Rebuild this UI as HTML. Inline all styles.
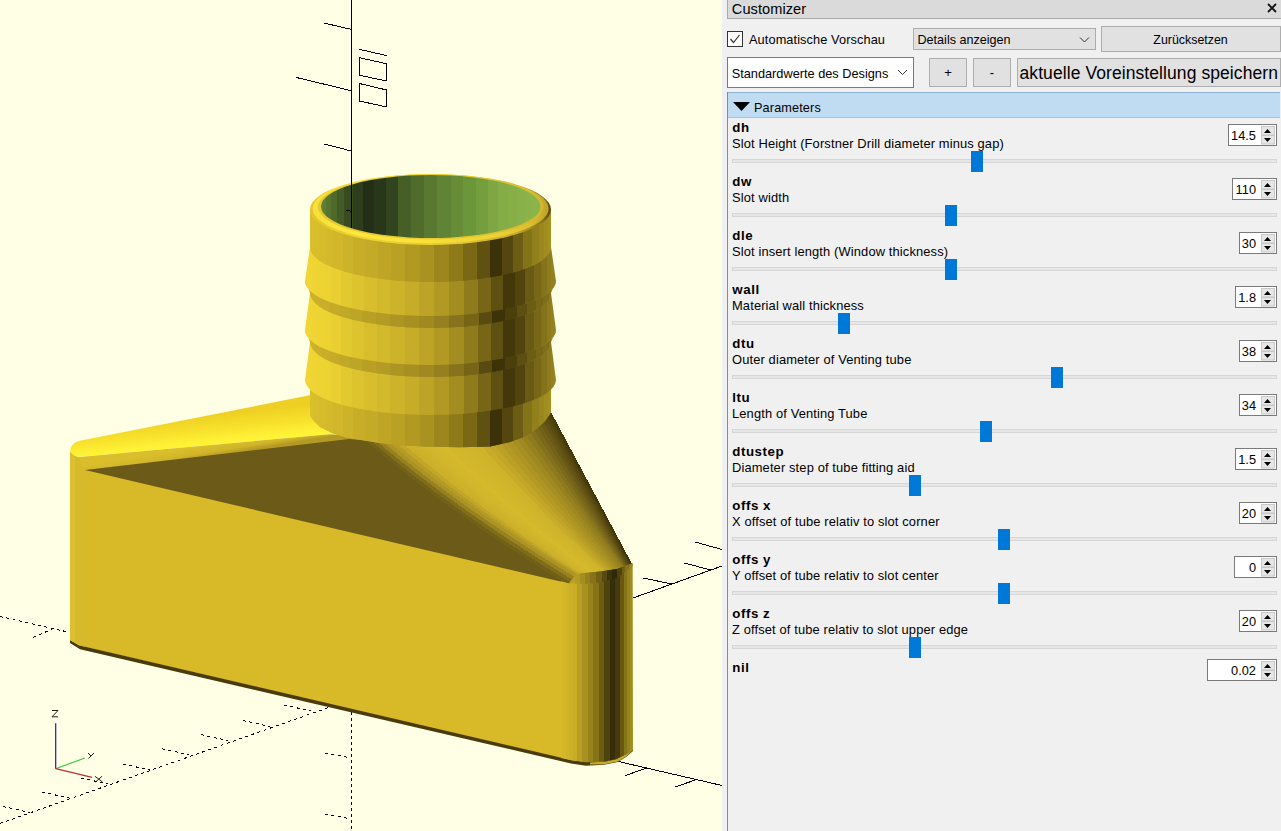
<!DOCTYPE html>
<html><head><meta charset="utf-8"><style>
html,body{margin:0;padding:0;background:#f0f0f0;}
body{width:1281px;height:831px;overflow:hidden;position:relative;}
svg{position:absolute;left:0;top:0;font-family:"Liberation Sans", sans-serif;}
</style></head><body>
<svg width="1281" height="831" viewBox="0 0 1281 831">
<rect x="722" y="0" width="559" height="831" fill="#f0f0f0"/>
<rect x="727" y="0" width="554" height="18" fill="#dadada"/>
<line x1="727.5" y1="0" x2="727.5" y2="18.5" stroke="#a8a8a8"/>
<line x1="727" y1="18.5" x2="1281" y2="18.5" stroke="#a8a8a8"/>
<text x="731.8" y="14" font-size="14.6" font-weight="normal" fill="#000" text-anchor="start" letter-spacing="0.05">Customizer</text>
<path d="M1268,4 L1276,12 M1276,4 L1268,12" stroke="#111" stroke-width="1.8"/>
<rect x="727.5" y="31.5" width="15" height="15" fill="#fff" stroke="#333" stroke-width="1"/>
<path d="M730.5,39 L733.5,42.5 L739.5,35" fill="none" stroke="#333" stroke-width="1.2"/>
<text x="749" y="43.7" font-size="12.75" font-weight="normal" fill="#000" text-anchor="start" letter-spacing="0.1">Automatische Vorschau</text>
<rect x="913.5" y="28.5" width="182" height="21" fill="#e1e1e1" stroke="#adadad" stroke-width="1"/>
<text x="917.5" y="43.9" font-size="12.6" font-weight="normal" fill="#000" text-anchor="start">Details anzeigen</text>
<path d="M1080,37.5 L1084.5,42 L1089,37.5" fill="none" stroke="#333" stroke-width="1"/>
<rect x="1101.5" y="26.5" width="179" height="25" fill="#e1e1e1" stroke="#adadad" stroke-width="1"/>
<text x="1190.5" y="44" font-size="12.4" font-weight="normal" fill="#000" text-anchor="middle">Zurücksetzen</text>
<rect x="727.5" y="57.5" width="186" height="30" fill="#ffffff" stroke="#7a7a7a" stroke-width="1"/>
<text x="731.7" y="77.8" font-size="12.75" font-weight="normal" fill="#000" text-anchor="start">Standardwerte des Designs</text>
<path d="M898,70 L902.5,74.5 L907,70" fill="none" stroke="#333" stroke-width="1"/>
<rect x="929.5" y="58.5" width="37" height="28" fill="#e1e1e1" stroke="#adadad" stroke-width="1"/>
<text x="948" y="77" font-size="13" font-weight="normal" fill="#000" text-anchor="middle">+</text>
<rect x="973.5" y="58.5" width="37" height="28" fill="#e1e1e1" stroke="#adadad" stroke-width="1"/>
<text x="992" y="77" font-size="13" font-weight="normal" fill="#000" text-anchor="middle">-</text>
<rect x="1017.5" y="58.5" width="263" height="28" fill="#e1e1e1" stroke="#adadad" stroke-width="1"/>
<text x="1019.5" y="79.3" font-size="17.5" font-weight="normal" fill="#000" text-anchor="start" letter-spacing="0.08">aktuelle Voreinstellung speichern</text>
<rect x="727" y="92" width="553" height="26" fill="#c0dcf3"/>
<line x1="727" y1="92.5" x2="1280" y2="92.5" stroke="#8fb3d6"/>
<line x1="727" y1="117.5" x2="1280" y2="117.5" stroke="#9ec4e8"/>
<path d="M733,102 L750,102 L741.5,111 Z" fill="#000"/>
<text x="754" y="111.6" font-size="12.7" font-weight="normal" fill="#000" text-anchor="start" letter-spacing="0.13">Parameters</text>
<line x1="727.5" y1="92" x2="727.5" y2="831" stroke="#8a8a8a"/>
<text x="732.3" y="131.7" font-size="13.3" font-weight="bold" fill="#000" text-anchor="start" letter-spacing="0.55">dh</text>
<text x="732" y="148" font-size="12.9" font-weight="normal" fill="#000" text-anchor="start" letter-spacing="0.13">Slot Height (Forstner Drill diameter minus gap)</text>
<rect x="732.5" y="159.5" width="544" height="3" fill="#e7e7e7" stroke="#d6d6d6" stroke-width="1"/>
<rect x="971" y="151" width="12" height="21" fill="#0078d7"/>
<rect x="1228.5" y="124.5" width="48" height="21" fill="#ffffff" stroke="#7a7a7a" stroke-width="1"/>
<rect x="1261.5" y="126.5" width="13" height="8.5" fill="#e6e6e6" stroke="#c8c8c8" stroke-width="1"/>
<rect x="1261.5" y="135.5" width="13" height="8.5" fill="#e6e6e6" stroke="#c8c8c8" stroke-width="1"/>
<path d="M1264,133 L1271,133 L1267.5,129 Z" fill="#000"/>
<path d="M1264,138 L1271,138 L1267.5,142 Z" fill="#000"/>
<text x="1256" y="139.9" font-size="12.8" font-weight="normal" fill="#000" text-anchor="end">14.5</text>
<text x="732.3" y="185.7" font-size="13.3" font-weight="bold" fill="#000" text-anchor="start" letter-spacing="0.55">dw</text>
<text x="732" y="202" font-size="12.9" font-weight="normal" fill="#000" text-anchor="start" letter-spacing="0.13">Slot width</text>
<rect x="732.5" y="213.5" width="544" height="3" fill="#e7e7e7" stroke="#d6d6d6" stroke-width="1"/>
<rect x="945" y="205" width="12" height="21" fill="#0078d7"/>
<rect x="1232.5" y="178.5" width="44" height="21" fill="#ffffff" stroke="#7a7a7a" stroke-width="1"/>
<rect x="1261.5" y="180.5" width="13" height="8.5" fill="#e6e6e6" stroke="#c8c8c8" stroke-width="1"/>
<rect x="1261.5" y="189.5" width="13" height="8.5" fill="#e6e6e6" stroke="#c8c8c8" stroke-width="1"/>
<path d="M1264,187 L1271,187 L1267.5,183 Z" fill="#000"/>
<path d="M1264,192 L1271,192 L1267.5,196 Z" fill="#000"/>
<text x="1256" y="193.9" font-size="12.8" font-weight="normal" fill="#000" text-anchor="end">110</text>
<text x="732.3" y="239.7" font-size="13.3" font-weight="bold" fill="#000" text-anchor="start" letter-spacing="0.55">dle</text>
<text x="732" y="256" font-size="12.9" font-weight="normal" fill="#000" text-anchor="start" letter-spacing="0.13">Slot insert length (Window thickness)</text>
<rect x="732.5" y="267.5" width="544" height="3" fill="#e7e7e7" stroke="#d6d6d6" stroke-width="1"/>
<rect x="945" y="259" width="12" height="21" fill="#0078d7"/>
<rect x="1239.5" y="232.5" width="37" height="21" fill="#ffffff" stroke="#7a7a7a" stroke-width="1"/>
<rect x="1261.5" y="234.5" width="13" height="8.5" fill="#e6e6e6" stroke="#c8c8c8" stroke-width="1"/>
<rect x="1261.5" y="243.5" width="13" height="8.5" fill="#e6e6e6" stroke="#c8c8c8" stroke-width="1"/>
<path d="M1264,241 L1271,241 L1267.5,237 Z" fill="#000"/>
<path d="M1264,246 L1271,246 L1267.5,250 Z" fill="#000"/>
<text x="1256" y="247.9" font-size="12.8" font-weight="normal" fill="#000" text-anchor="end">30</text>
<text x="732.3" y="293.7" font-size="13.3" font-weight="bold" fill="#000" text-anchor="start" letter-spacing="0.55">wall</text>
<text x="732" y="310" font-size="12.9" font-weight="normal" fill="#000" text-anchor="start" letter-spacing="0.13">Material wall thickness</text>
<rect x="732.5" y="321.5" width="544" height="3" fill="#e7e7e7" stroke="#d6d6d6" stroke-width="1"/>
<rect x="838" y="313" width="12" height="21" fill="#0078d7"/>
<rect x="1235.5" y="286.5" width="41" height="21" fill="#ffffff" stroke="#7a7a7a" stroke-width="1"/>
<rect x="1261.5" y="288.5" width="13" height="8.5" fill="#e6e6e6" stroke="#c8c8c8" stroke-width="1"/>
<rect x="1261.5" y="297.5" width="13" height="8.5" fill="#e6e6e6" stroke="#c8c8c8" stroke-width="1"/>
<path d="M1264,295 L1271,295 L1267.5,291 Z" fill="#000"/>
<path d="M1264,300 L1271,300 L1267.5,304 Z" fill="#000"/>
<text x="1256" y="301.9" font-size="12.8" font-weight="normal" fill="#000" text-anchor="end">1.8</text>
<text x="732.3" y="347.7" font-size="13.3" font-weight="bold" fill="#000" text-anchor="start" letter-spacing="0.55">dtu</text>
<text x="732" y="364" font-size="12.9" font-weight="normal" fill="#000" text-anchor="start" letter-spacing="0.13">Outer diameter of Venting tube</text>
<rect x="732.5" y="375.5" width="544" height="3" fill="#e7e7e7" stroke="#d6d6d6" stroke-width="1"/>
<rect x="1051" y="367" width="12" height="21" fill="#0078d7"/>
<rect x="1239.5" y="340.5" width="37" height="21" fill="#ffffff" stroke="#7a7a7a" stroke-width="1"/>
<rect x="1261.5" y="342.5" width="13" height="8.5" fill="#e6e6e6" stroke="#c8c8c8" stroke-width="1"/>
<rect x="1261.5" y="351.5" width="13" height="8.5" fill="#e6e6e6" stroke="#c8c8c8" stroke-width="1"/>
<path d="M1264,349 L1271,349 L1267.5,345 Z" fill="#000"/>
<path d="M1264,354 L1271,354 L1267.5,358 Z" fill="#000"/>
<text x="1256" y="355.9" font-size="12.8" font-weight="normal" fill="#000" text-anchor="end">38</text>
<text x="732.3" y="401.7" font-size="13.3" font-weight="bold" fill="#000" text-anchor="start" letter-spacing="0.55">ltu</text>
<text x="732" y="418" font-size="12.9" font-weight="normal" fill="#000" text-anchor="start" letter-spacing="0.13">Length of Venting Tube</text>
<rect x="732.5" y="429.5" width="544" height="3" fill="#e7e7e7" stroke="#d6d6d6" stroke-width="1"/>
<rect x="980" y="421" width="12" height="21" fill="#0078d7"/>
<rect x="1239.5" y="394.5" width="37" height="21" fill="#ffffff" stroke="#7a7a7a" stroke-width="1"/>
<rect x="1261.5" y="396.5" width="13" height="8.5" fill="#e6e6e6" stroke="#c8c8c8" stroke-width="1"/>
<rect x="1261.5" y="405.5" width="13" height="8.5" fill="#e6e6e6" stroke="#c8c8c8" stroke-width="1"/>
<path d="M1264,403 L1271,403 L1267.5,399 Z" fill="#000"/>
<path d="M1264,408 L1271,408 L1267.5,412 Z" fill="#000"/>
<text x="1256" y="409.9" font-size="12.8" font-weight="normal" fill="#000" text-anchor="end">34</text>
<text x="732.3" y="455.7" font-size="13.3" font-weight="bold" fill="#000" text-anchor="start" letter-spacing="0.55">dtustep</text>
<text x="732" y="472" font-size="12.9" font-weight="normal" fill="#000" text-anchor="start" letter-spacing="0.13">Diameter step of tube fitting aid</text>
<rect x="732.5" y="483.5" width="544" height="3" fill="#e7e7e7" stroke="#d6d6d6" stroke-width="1"/>
<rect x="909" y="475" width="12" height="21" fill="#0078d7"/>
<rect x="1235.5" y="448.5" width="41" height="21" fill="#ffffff" stroke="#7a7a7a" stroke-width="1"/>
<rect x="1261.5" y="450.5" width="13" height="8.5" fill="#e6e6e6" stroke="#c8c8c8" stroke-width="1"/>
<rect x="1261.5" y="459.5" width="13" height="8.5" fill="#e6e6e6" stroke="#c8c8c8" stroke-width="1"/>
<path d="M1264,457 L1271,457 L1267.5,453 Z" fill="#000"/>
<path d="M1264,462 L1271,462 L1267.5,466 Z" fill="#000"/>
<text x="1256" y="463.9" font-size="12.8" font-weight="normal" fill="#000" text-anchor="end">1.5</text>
<text x="732.3" y="509.7" font-size="13.3" font-weight="bold" fill="#000" text-anchor="start" letter-spacing="0.55">offs x</text>
<text x="732" y="526" font-size="12.9" font-weight="normal" fill="#000" text-anchor="start" letter-spacing="0.13">X offset of tube relativ to slot corner</text>
<rect x="732.5" y="537.5" width="544" height="3" fill="#e7e7e7" stroke="#d6d6d6" stroke-width="1"/>
<rect x="998" y="529" width="12" height="21" fill="#0078d7"/>
<rect x="1239.5" y="502.5" width="37" height="21" fill="#ffffff" stroke="#7a7a7a" stroke-width="1"/>
<rect x="1261.5" y="504.5" width="13" height="8.5" fill="#e6e6e6" stroke="#c8c8c8" stroke-width="1"/>
<rect x="1261.5" y="513.5" width="13" height="8.5" fill="#e6e6e6" stroke="#c8c8c8" stroke-width="1"/>
<path d="M1264,511 L1271,511 L1267.5,507 Z" fill="#000"/>
<path d="M1264,516 L1271,516 L1267.5,520 Z" fill="#000"/>
<text x="1256" y="517.9" font-size="12.8" font-weight="normal" fill="#000" text-anchor="end">20</text>
<text x="732.3" y="563.7" font-size="13.3" font-weight="bold" fill="#000" text-anchor="start" letter-spacing="0.55">offs y</text>
<text x="732" y="580" font-size="12.9" font-weight="normal" fill="#000" text-anchor="start" letter-spacing="0.13">Y offset of tube relativ to slot center</text>
<rect x="732.5" y="591.5" width="544" height="3" fill="#e7e7e7" stroke="#d6d6d6" stroke-width="1"/>
<rect x="998" y="583" width="12" height="21" fill="#0078d7"/>
<rect x="1234.5" y="556.5" width="42" height="21" fill="#ffffff" stroke="#7a7a7a" stroke-width="1"/>
<rect x="1261.5" y="558.5" width="13" height="8.5" fill="#e6e6e6" stroke="#c8c8c8" stroke-width="1"/>
<rect x="1261.5" y="567.5" width="13" height="8.5" fill="#e6e6e6" stroke="#c8c8c8" stroke-width="1"/>
<path d="M1264,565 L1271,565 L1267.5,561 Z" fill="#000"/>
<path d="M1264,570 L1271,570 L1267.5,574 Z" fill="#000"/>
<text x="1256" y="571.9" font-size="12.8" font-weight="normal" fill="#000" text-anchor="end">0</text>
<text x="732.3" y="617.7" font-size="13.3" font-weight="bold" fill="#000" text-anchor="start" letter-spacing="0.55">offs z</text>
<text x="732" y="634" font-size="12.9" font-weight="normal" fill="#000" text-anchor="start" letter-spacing="0.13">Z offset of tube relativ to slot upper edge</text>
<rect x="732.5" y="645.5" width="544" height="3" fill="#e7e7e7" stroke="#d6d6d6" stroke-width="1"/>
<rect x="909" y="637" width="12" height="21" fill="#0078d7"/>
<rect x="1239.5" y="610.5" width="37" height="21" fill="#ffffff" stroke="#7a7a7a" stroke-width="1"/>
<rect x="1261.5" y="612.5" width="13" height="8.5" fill="#e6e6e6" stroke="#c8c8c8" stroke-width="1"/>
<rect x="1261.5" y="621.5" width="13" height="8.5" fill="#e6e6e6" stroke="#c8c8c8" stroke-width="1"/>
<path d="M1264,619 L1271,619 L1267.5,615 Z" fill="#000"/>
<path d="M1264,624 L1271,624 L1267.5,628 Z" fill="#000"/>
<text x="1256" y="625.9" font-size="12.8" font-weight="normal" fill="#000" text-anchor="end">20</text>
<text x="732.3" y="672" font-size="13.3" font-weight="bold" fill="#000" text-anchor="start" letter-spacing="0.55">nil</text>
<rect x="1207.5" y="659.5" width="69" height="21" fill="#ffffff" stroke="#7a7a7a" stroke-width="1"/>
<rect x="1261.5" y="661.5" width="13" height="8.5" fill="#e6e6e6" stroke="#c8c8c8" stroke-width="1"/>
<rect x="1261.5" y="670.5" width="13" height="8.5" fill="#e6e6e6" stroke="#c8c8c8" stroke-width="1"/>
<path d="M1264,668 L1271,668 L1267.5,664 Z" fill="#000"/>
<path d="M1264,673 L1271,673 L1267.5,677 Z" fill="#000"/>
<text x="1256" y="674.9" font-size="12.8" font-weight="normal" fill="#000" text-anchor="end">0.02</text>
<rect x="0" y="0" width="722" height="831" fill="#ffffe5"/>
<line x1="618" y1="761.4" x2="722" y2="785.5" stroke="#000000" stroke-width="1" shape-rendering="crispEdges"/>
<line x1="625" y1="775.6" x2="647" y2="768" stroke="#000000" stroke-width="1" shape-rendering="crispEdges"/>
<line x1="675" y1="787" x2="697" y2="779.4" stroke="#000000" stroke-width="1" shape-rendering="crispEdges"/>
<line x1="633" y1="598" x2="722" y2="566" stroke="#000000" stroke-width="1" shape-rendering="crispEdges"/>
<line x1="643" y1="578" x2="672" y2="584" stroke="#000000" stroke-width="1" shape-rendering="crispEdges"/>
<line x1="684" y1="563" x2="711" y2="570" stroke="#000000" stroke-width="1" shape-rendering="crispEdges"/>
<line x1="695" y1="542" x2="722" y2="549.5" stroke="#000000" stroke-width="1" shape-rendering="crispEdges"/>
<line x1="0" y1="616.5" x2="70" y2="632.5" stroke="#000000" stroke-width="1" shape-rendering="crispEdges" stroke-dasharray="3,3.5"/>
<line x1="33" y1="637.6" x2="53.6" y2="628.4" stroke="#000000" stroke-width="1" shape-rendering="crispEdges" stroke-dasharray="3,3.5"/>
<line x1="0" y1="823.5" x2="330" y2="707" stroke="#000000" stroke-width="1" shape-rendering="crispEdges" stroke-dasharray="3,3.5"/>
<line x1="284" y1="705" x2="311" y2="711" stroke="#000000" stroke-width="1" shape-rendering="crispEdges" stroke-dasharray="3,3.5"/>
<line x1="243" y1="720.5" x2="270" y2="726.5" stroke="#000000" stroke-width="1" shape-rendering="crispEdges" stroke-dasharray="3,3.5"/>
<line x1="201" y1="734.6" x2="228" y2="740.6" stroke="#000000" stroke-width="1" shape-rendering="crispEdges" stroke-dasharray="3,3.5"/>
<line x1="162" y1="748.7" x2="189" y2="754.7" stroke="#000000" stroke-width="1" shape-rendering="crispEdges" stroke-dasharray="3,3.5"/>
<line x1="123" y1="764" x2="150" y2="770" stroke="#000000" stroke-width="1" shape-rendering="crispEdges" stroke-dasharray="3,3.5"/>
<line x1="81" y1="778" x2="108" y2="784" stroke="#000000" stroke-width="1" shape-rendering="crispEdges" stroke-dasharray="3,3.5"/>
<line x1="42" y1="792" x2="69" y2="798" stroke="#000000" stroke-width="1" shape-rendering="crispEdges" stroke-dasharray="3,3.5"/>
<line x1="3" y1="806.5" x2="30" y2="812.5" stroke="#000000" stroke-width="1" shape-rendering="crispEdges" stroke-dasharray="3,3.5"/>
<line x1="351.5" y1="712" x2="351.5" y2="831" stroke="#000000" stroke-width="1" shape-rendering="crispEdges" stroke-dasharray="3,3"/>
<line x1="325" y1="753" x2="351" y2="758" stroke="#000000" stroke-width="1" shape-rendering="crispEdges" stroke-dasharray="3,3.5"/>
<line x1="325" y1="814" x2="351" y2="819" stroke="#000000" stroke-width="1" shape-rendering="crispEdges" stroke-dasharray="3,3.5"/>
<line x1="55.7" y1="723.3" x2="55.7" y2="768.7" stroke="#1c1ca0" stroke-width="1.2"/>
<line x1="55.7" y1="768.7" x2="84.9" y2="758" stroke="#3cc83c" stroke-width="1.2"/>
<line x1="55.7" y1="768.7" x2="92" y2="777.4" stroke="#b43232" stroke-width="1.2"/>
<path d="M52,710.5 L58,710.5 L52,716.8 L58,716.8" fill="none" stroke="#222" stroke-width="1"/>
<path d="M88,753 L91,756 M94,753 L88.5,758.5" fill="none" stroke="#222" stroke-width="1"/>
<path d="M95,776.3 L102.5,782 M102,776.3 L95.5,782" fill="none" stroke="#222" stroke-width="1"/>
<defs><linearGradient id="gBright" gradientUnits="userSpaceOnUse" x1="200" y1="416" x2="203" y2="446"><stop offset="0" stop-color="#eed024"/><stop offset="0.5" stop-color="#f8e22c"/><stop offset="0.88" stop-color="#fff236"/><stop offset="1" stop-color="#fff438"/></linearGradient><linearGradient id="gMed" gradientUnits="userSpaceOnUse" x1="200" y1="446" x2="202" y2="458"><stop offset="0" stop-color="#dabe2c"/><stop offset="0.6" stop-color="#d2b62a"/><stop offset="1" stop-color="#b49a24"/></linearGradient></defs>
<path d="M70,451 Q70,443 81,440.5 L312,394.8 L420,380 L420,440 L330,434.3 L150,450.4 L78,457 Q72,455 70,451 Z" fill="url(#gBright)"/>
<path d="M77,457.2 L150,450.4 L330,434.3 L420,440 L349,446 L85,476 Z" fill="url(#gMed)"/>
<path d="M85,470 L349,439 L430,446 L560,560 L575,584 L569,590 L85,476 Z" fill="#6b5a18"/>
<path d="M364.87,439.98 L371.01,440.96 Q453.95,511.90 571.17,582.84 L569.00,585.50 Q448.94,512.74 364.87,439.98 Z" fill="#716018" shape-rendering="crispEdges"/>
<path d="M371.01,440.96 L377.36,441.98 Q459.07,511.08 573.35,580.17 L571.17,582.84 Q453.95,511.90 371.01,440.96 Z" fill="#806d19" shape-rendering="crispEdges"/>
<path d="M377.36,441.98 L383.90,442.85 Q464.27,510.18 575.52,577.51 L573.35,580.17 Q459.07,511.08 377.36,441.98 Z" fill="#978120" shape-rendering="crispEdges"/>
<path d="M383.90,442.85 L390.61,443.62 Q469.54,509.63 577.70,575.63 L575.52,577.51 Q464.27,510.18 383.90,442.85 Z" fill="#ab9324" shape-rendering="crispEdges"/>
<path d="M390.61,443.62 L397.45,444.41 Q474.87,509.92 579.87,575.43 L577.70,575.63 Q469.54,509.63 390.61,443.62 Z" fill="#b69c26" shape-rendering="crispEdges"/>
<path d="M397.45,444.41 L404.42,444.92 Q480.25,510.07 582.04,575.22 L579.87,575.43 Q474.87,509.92 397.45,444.41 Z" fill="#c1a628" shape-rendering="crispEdges"/>
<path d="M404.42,444.92 L411.48,445.27 Q485.66,510.14 584.22,575.01 L582.04,575.22 Q480.25,510.07 404.42,444.92 Z" fill="#ccb02a" shape-rendering="crispEdges"/>
<path d="M411.48,445.27 L418.60,445.63 Q491.10,510.22 586.39,574.80 L584.22,575.01 Q485.66,510.14 411.48,445.27 Z" fill="#ceb22a" shape-rendering="crispEdges"/>
<path d="M418.60,445.63 L425.77,445.99 Q496.54,510.29 588.57,574.59 L586.39,574.80 Q491.10,510.22 418.60,445.63 Z" fill="#d0b42b" shape-rendering="crispEdges"/>
<path d="M425.77,445.99 L432.95,446.25 Q501.98,510.32 590.74,574.39 L588.57,574.59 Q496.54,510.29 425.77,445.99 Z" fill="#d2b62b" shape-rendering="crispEdges"/>
<path d="M432.95,446.25 L440.13,446.37 Q507.40,510.27 592.91,574.18 L590.74,574.39 Q501.98,510.32 432.95,446.25 Z" fill="#d4b82c" shape-rendering="crispEdges"/>
<path d="M440.13,446.37 L447.27,446.49 Q512.80,510.23 595.09,573.97 L592.91,574.18 Q507.40,510.27 440.13,446.37 Z" fill="#d6ba2c" shape-rendering="crispEdges"/>
<path d="M447.27,446.49 L454.35,446.61 Q518.14,510.18 597.26,573.76 L595.09,573.97 Q512.80,510.23 447.27,446.49 Z" fill="#d4b82c" shape-rendering="crispEdges"/>
<path d="M454.35,446.61 L461.35,446.66 Q523.43,510.11 599.43,573.55 L597.26,573.76 Q518.14,510.18 454.35,446.61 Z" fill="#d3b72b" shape-rendering="crispEdges"/>
<path d="M461.35,446.66 L468.24,446.48 Q528.65,509.87 601.61,573.26 L599.43,573.55 Q523.43,510.11 461.35,446.66 Z" fill="#d1b52b" shape-rendering="crispEdges"/>
<path d="M468.24,446.48 L474.99,446.30 Q533.78,509.62 603.78,572.94 L601.61,573.26 Q528.65,509.87 468.24,446.48 Z" fill="#d0b42a" shape-rendering="crispEdges"/>
<path d="M474.99,446.30 L481.58,446.12 Q538.82,509.37 605.96,572.62 L603.78,572.94 Q533.78,509.62 474.99,446.30 Z" fill="#ceb22a" shape-rendering="crispEdges"/>
<path d="M481.58,446.12 L488.00,445.95 Q543.75,509.13 608.13,572.30 L605.96,572.62 Q538.82,509.37 481.58,446.12 Z" fill="#c8ac29" shape-rendering="crispEdges"/>
<path d="M488.00,445.95 L494.21,444.95 Q548.55,508.47 610.30,571.98 L608.13,572.30 Q543.75,509.13 488.00,445.95 Z" fill="#c1a627" shape-rendering="crispEdges"/>
<path d="M494.21,444.95 L500.19,443.61 Q553.22,507.64 612.48,571.67 L610.30,571.98 Q548.55,508.47 494.21,444.95 Z" fill="#bba026" shape-rendering="crispEdges"/>
<path d="M500.19,443.61 L505.92,442.32 Q557.74,506.83 614.65,571.35 L612.48,571.67 Q553.22,507.64 500.19,443.61 Z" fill="#b49a24" shape-rendering="crispEdges"/>
<path d="M505.92,442.32 L511.39,440.89 Q562.10,505.96 616.83,571.03 L614.65,571.35 Q557.74,506.83 505.92,442.32 Z" fill="#ad9423" shape-rendering="crispEdges"/>
<path d="M511.39,440.89 L516.57,438.99 Q566.28,504.63 619.00,570.26 L616.83,571.03 Q562.10,505.96 511.39,440.89 Z" fill="#a68e22" shape-rendering="crispEdges"/>
<path d="M516.57,438.99 L521.44,437.20 Q570.27,503.33 621.17,569.46 L619.00,570.26 Q566.28,504.63 516.57,438.99 Z" fill="#9e8821" shape-rendering="crispEdges"/>
<path d="M521.44,437.20 L525.99,435.25 Q574.06,501.95 623.35,568.66 L621.17,569.46 Q570.27,503.33 521.44,437.20 Z" fill="#97811f" shape-rendering="crispEdges"/>
<path d="M525.99,435.25 L530.20,432.47 Q577.07,500.36 624.44,568.25 L623.35,568.66 Q574.06,501.95 525.99,435.25 Z" fill="#8d791e" shape-rendering="crispEdges"/>
<path d="M530.20,432.47 L534.06,429.94 Q579.66,498.94 625.27,567.95 L624.44,568.25 Q577.07,500.36 530.20,432.47 Z" fill="#84711c" shape-rendering="crispEdges"/>
<path d="M534.06,429.94 L537.55,427.48 Q581.82,497.56 626.09,567.64 L625.27,567.95 Q579.66,498.94 534.06,429.94 Z" fill="#7b691b" shape-rendering="crispEdges"/>
<path d="M537.55,427.48 L540.65,424.53 Q583.79,495.93 626.92,567.34 L626.09,567.64 Q581.82,497.56 537.55,427.48 Z" fill="#726119" shape-rendering="crispEdges"/>
<path d="M540.65,424.53 L543.37,421.95 Q585.56,494.49 627.75,567.03 L626.92,567.34 Q583.79,495.93 540.65,424.53 Z" fill="#6a5916" shape-rendering="crispEdges"/>
<path d="M543.37,421.95 L545.68,419.44 Q587.13,493.08 628.57,566.73 L627.75,567.03 Q585.56,494.49 543.37,421.95 Z" fill="#615213" shape-rendering="crispEdges"/>
<path d="M545.68,419.44 L547.59,416.78 Q588.49,491.60 629.40,566.42 L628.57,566.73 Q587.13,493.08 545.68,419.44 Z" fill="#594a10" shape-rendering="crispEdges"/>
<path d="M547.59,416.78 L549.08,414.69 Q589.65,490.40 630.22,566.12 L629.40,566.42 Q588.49,491.60 547.59,416.78 Z" fill="#51430d" shape-rendering="crispEdges"/>
<path d="M549.08,414.69 L550.14,413.20 Q590.60,489.50 631.05,565.81 L630.22,566.12 Q589.65,490.40 549.08,414.69 Z" fill="#4a3d0c" shape-rendering="crispEdges"/>
<path d="M550.14,413.20 L550.79,412.30 Q591.33,488.90 631.87,565.51 L631.05,565.81 Q590.60,489.50 550.14,413.20 Z" fill="#44370a" shape-rendering="crispEdges"/>
<path d="M550.79,412.30 L551.00,412.00 Q591.85,488.60 632.70,565.20 L631.87,565.51 Q591.33,488.90 550.79,412.30 Z" fill="#3d3109" shape-rendering="crispEdges"/>
<path d="M85,470 L569,583.5 L569,760.5 L85,646.7 L80,646 L80,470 Z" fill="#d8b928"/>
<path d="M70,640 L79,645.2 L571,760 L586,762 L604,761.5 L616,759 L626,754 L633,749.8 L633,751 L626,757 L618,762 L604,764.8 L586,765.7 L571,763.4 L80,649.2 L70,643 Z" fill="#4a3c0a"/>
<path d="M590,762.6 L604,761.8 L616,759.2 L626,754.2 L633,750 L626,756.6 L618,761.5 L604,764.3 L590,764.6 Z" fill="#c8ac30"/>
<defs><linearGradient id="gStrip" gradientUnits="userSpaceOnUse" x1="70" y1="0" x2="85" y2="0"><stop offset="0" stop-color="#dcc02e"/><stop offset="0.35" stop-color="#dcc02e"/><stop offset="0.36" stop-color="#d6ba2c"/><stop offset="1" stop-color="#d6ba2c"/></linearGradient></defs>
<path d="M70,451 Q72,455 78,457 L85,470 L85,646.7 L79,645.2 L70,640 Z" fill="url(#gStrip)"/>
<defs><linearGradient id="gCyl" gradientUnits="userSpaceOnUse" x1="561" y1="0" x2="633" y2="0"><stop offset="0.0000" stop-color="#d8b928"/><stop offset="0.0104" stop-color="#d8b928"/><stop offset="0.0104" stop-color="#d6b828"/><stop offset="0.0323" stop-color="#d6b828"/><stop offset="0.0323" stop-color="#d4b627"/><stop offset="0.0657" stop-color="#d4b627"/><stop offset="0.0657" stop-color="#d1b327"/><stop offset="0.1098" stop-color="#d1b327"/><stop offset="0.1098" stop-color="#cdb027"/><stop offset="0.1635" stop-color="#cdb027"/><stop offset="0.1635" stop-color="#c8ac26"/><stop offset="0.2255" stop-color="#c8ac26"/><stop offset="0.2255" stop-color="#b99f23"/><stop offset="0.2942" stop-color="#b99f23"/><stop offset="0.2942" stop-color="#a99020"/><stop offset="0.3681" stop-color="#a99020"/><stop offset="0.3681" stop-color="#98821c"/><stop offset="0.4451" stop-color="#98821c"/><stop offset="0.4451" stop-color="#867317"/><stop offset="0.5236" stop-color="#867317"/><stop offset="0.5236" stop-color="#6c5c12"/><stop offset="0.6014" stop-color="#6c5c12"/><stop offset="0.6014" stop-color="#4f430d"/><stop offset="0.6767" stop-color="#4f430d"/><stop offset="0.6767" stop-color="#362d0b"/><stop offset="0.7477" stop-color="#362d0b"/><stop offset="0.7477" stop-color="#45390d"/><stop offset="0.8126" stop-color="#45390d"/><stop offset="0.8126" stop-color="#675713"/><stop offset="0.8698" stop-color="#675713"/><stop offset="0.8698" stop-color="#857519"/><stop offset="0.9179" stop-color="#857519"/><stop offset="0.9179" stop-color="#95841d"/><stop offset="0.9557" stop-color="#95841d"/><stop offset="0.9557" stop-color="#a08d20"/><stop offset="0.9823" stop-color="#a08d20"/><stop offset="0.9823" stop-color="#a79322"/><stop offset="0.9970" stop-color="#a79322"/><stop offset="0.9970" stop-color="#a89422"/><stop offset="1.0000" stop-color="#a89422"/></linearGradient></defs>
<path d="M561,581.3 L569,583.5 L577,573.7 L600,571.5 L617,569 L632.7,563.2 L633,750 L626,754.4 L616,759.2 L604,761.7 L586,762.2 L571,760.2 L561,758 Z" fill="url(#gCyl)"/>
<defs><linearGradient id="gCyl2" gradientUnits="userSpaceOnUse" x1="561" y1="0" x2="633" y2="0"><stop offset="0.0000" stop-color="#c8ab25"/><stop offset="0.0199" stop-color="#c8ab25"/><stop offset="0.0199" stop-color="#c6aa25"/><stop offset="0.0476" stop-color="#c6aa25"/><stop offset="0.0476" stop-color="#c4a825"/><stop offset="0.0865" stop-color="#c4a825"/><stop offset="0.0865" stop-color="#c0a524"/><stop offset="0.1355" stop-color="#c0a524"/><stop offset="0.1355" stop-color="#bca224"/><stop offset="0.1935" stop-color="#bca224"/><stop offset="0.1935" stop-color="#b39a22"/><stop offset="0.2591" stop-color="#b39a22"/><stop offset="0.2591" stop-color="#a48d1f"/><stop offset="0.3306" stop-color="#a48d1f"/><stop offset="0.3306" stop-color="#95801c"/><stop offset="0.4063" stop-color="#95801c"/><stop offset="0.4063" stop-color="#867218"/><stop offset="0.4843" stop-color="#867218"/><stop offset="0.4843" stop-color="#716013"/><stop offset="0.5627" stop-color="#716013"/><stop offset="0.5627" stop-color="#574a0f"/><stop offset="0.6395" stop-color="#574a0f"/><stop offset="0.6395" stop-color="#3e330b"/><stop offset="0.7129" stop-color="#3e330b"/><stop offset="0.7129" stop-color="#30280a"/><stop offset="0.7810" stop-color="#30280a"/><stop offset="0.7810" stop-color="#50420e"/><stop offset="0.8423" stop-color="#50420e"/><stop offset="0.8423" stop-color="#6e5f14"/><stop offset="0.8951" stop-color="#6e5f14"/><stop offset="0.8951" stop-color="#857519"/><stop offset="0.9382" stop-color="#857519"/><stop offset="0.9382" stop-color="#907f1c"/><stop offset="0.9704" stop-color="#907f1c"/><stop offset="0.9704" stop-color="#98861f"/><stop offset="0.9911" stop-color="#98861f"/><stop offset="0.9911" stop-color="#9c8a20"/><stop offset="0.9998" stop-color="#9c8a20"/><stop offset="0.9998" stop-color="#9c8a20"/><stop offset="1.0000" stop-color="#9c8a20"/></linearGradient></defs>
<path d="M569,583.5 L577,573.7 L600,571.5 L617,569 L632.7,563.2 L632.7,566.5 L617,578 L600,582.5 L585,584 Z" fill="url(#gCyl2)"/>
<defs><linearGradient id="gBand" gradientUnits="userSpaceOnUse" x1="310.0" y1="0" x2="551.0" y2="0"><stop offset="0.0000" stop-color="#dac02c"/><stop offset="0.0057" stop-color="#dac02c"/><stop offset="0.0057" stop-color="#d9bf2b"/><stop offset="0.0184" stop-color="#d9bf2b"/><stop offset="0.0184" stop-color="#d8be2b"/><stop offset="0.0381" stop-color="#d8be2b"/><stop offset="0.0381" stop-color="#d6bc2b"/><stop offset="0.0645" stop-color="#d6bc2b"/><stop offset="0.0645" stop-color="#d4ba2a"/><stop offset="0.0973" stop-color="#d4ba2a"/><stop offset="0.0973" stop-color="#d1b729"/><stop offset="0.1359" stop-color="#d1b729"/><stop offset="0.1359" stop-color="#cdb329"/><stop offset="0.1799" stop-color="#cdb329"/><stop offset="0.1799" stop-color="#c8ae28"/><stop offset="0.2285" stop-color="#c8ae28"/><stop offset="0.2285" stop-color="#c3aa27"/><stop offset="0.2811" stop-color="#c3aa27"/><stop offset="0.2811" stop-color="#bea526"/><stop offset="0.3369" stop-color="#bea526"/><stop offset="0.3369" stop-color="#b9a124"/><stop offset="0.3951" stop-color="#b9a124"/><stop offset="0.3951" stop-color="#b19922"/><stop offset="0.4548" stop-color="#b19922"/><stop offset="0.4548" stop-color="#aa9220"/><stop offset="0.5151" stop-color="#aa9220"/><stop offset="0.5151" stop-color="#9d861d"/><stop offset="0.5752" stop-color="#9d861d"/><stop offset="0.5752" stop-color="#8e7a19"/><stop offset="0.6343" stop-color="#8e7a19"/><stop offset="0.6343" stop-color="#7a6815"/><stop offset="0.6913" stop-color="#7a6815"/><stop offset="0.6913" stop-color="#605110"/><stop offset="0.7456" stop-color="#605110"/><stop offset="0.7456" stop-color="#3c3108"/><stop offset="0.7963" stop-color="#3c3108"/><stop offset="0.7963" stop-color="#55460f"/><stop offset="0.8427" stop-color="#55460f"/><stop offset="0.8427" stop-color="#6d5d14"/><stop offset="0.8841" stop-color="#6d5d14"/><stop offset="0.8841" stop-color="#847419"/><stop offset="0.9199" stop-color="#847419"/><stop offset="0.9199" stop-color="#91801c"/><stop offset="0.9495" stop-color="#91801c"/><stop offset="0.9495" stop-color="#9a871e"/><stop offset="0.9726" stop-color="#9a871e"/><stop offset="0.9726" stop-color="#a18d1f"/><stop offset="0.9889" stop-color="#a18d1f"/><stop offset="0.9889" stop-color="#a59020"/><stop offset="0.9979" stop-color="#a59020"/><stop offset="0.9979" stop-color="#a79220"/><stop offset="1.0000" stop-color="#a79220"/></linearGradient><linearGradient id="gCone" gradientUnits="userSpaceOnUse" x1="307.5" y1="0" x2="553.5" y2="0"><stop offset="0.0000" stop-color="#f1d534"/><stop offset="0.0057" stop-color="#f1d534"/><stop offset="0.0057" stop-color="#f1d534"/><stop offset="0.0184" stop-color="#f1d534"/><stop offset="0.0184" stop-color="#f0d433"/><stop offset="0.0381" stop-color="#f0d433"/><stop offset="0.0381" stop-color="#eed433"/><stop offset="0.0645" stop-color="#eed433"/><stop offset="0.0645" stop-color="#edd232"/><stop offset="0.0973" stop-color="#edd232"/><stop offset="0.0973" stop-color="#e9cf31"/><stop offset="0.1359" stop-color="#e9cf31"/><stop offset="0.1359" stop-color="#e3c930"/><stop offset="0.1799" stop-color="#e3c930"/><stop offset="0.1799" stop-color="#ddc32e"/><stop offset="0.2285" stop-color="#ddc32e"/><stop offset="0.2285" stop-color="#d8be2d"/><stop offset="0.2811" stop-color="#d8be2d"/><stop offset="0.2811" stop-color="#d3b92c"/><stop offset="0.3369" stop-color="#d3b92c"/><stop offset="0.3369" stop-color="#cdb32a"/><stop offset="0.3951" stop-color="#cdb32a"/><stop offset="0.3951" stop-color="#c6ac28"/><stop offset="0.4548" stop-color="#c6ac28"/><stop offset="0.4548" stop-color="#bea426"/><stop offset="0.5151" stop-color="#bea426"/><stop offset="0.5151" stop-color="#b19924"/><stop offset="0.5752" stop-color="#b19924"/><stop offset="0.5752" stop-color="#a38d21"/><stop offset="0.6343" stop-color="#a38d21"/><stop offset="0.6343" stop-color="#8e7b1c"/><stop offset="0.6913" stop-color="#8e7b1c"/><stop offset="0.6913" stop-color="#786616"/><stop offset="0.7456" stop-color="#786616"/><stop offset="0.7456" stop-color="#5e5011"/><stop offset="0.7963" stop-color="#5e5011"/><stop offset="0.7963" stop-color="#44380b"/><stop offset="0.8427" stop-color="#44380b"/><stop offset="0.8427" stop-color="#51440e"/><stop offset="0.8841" stop-color="#51440e"/><stop offset="0.8841" stop-color="#695914"/><stop offset="0.9199" stop-color="#695914"/><stop offset="0.9199" stop-color="#786717"/><stop offset="0.9495" stop-color="#786717"/><stop offset="0.9495" stop-color="#84731a"/><stop offset="0.9726" stop-color="#84731a"/><stop offset="0.9726" stop-color="#8d7b1d"/><stop offset="0.9889" stop-color="#8d7b1d"/><stop offset="0.9889" stop-color="#92811e"/><stop offset="0.9979" stop-color="#92811e"/><stop offset="0.9979" stop-color="#95831f"/><stop offset="1.0000" stop-color="#95831f"/></linearGradient><linearGradient id="gShelf" gradientUnits="userSpaceOnUse" x1="305.0" y1="0" x2="556.0" y2="0"><stop offset="0.0000" stop-color="#d0b42a"/><stop offset="0.0057" stop-color="#d0b42a"/><stop offset="0.0057" stop-color="#cfb32a"/><stop offset="0.0184" stop-color="#cfb32a"/><stop offset="0.0184" stop-color="#cdb229"/><stop offset="0.0381" stop-color="#cdb229"/><stop offset="0.0381" stop-color="#cbb029"/><stop offset="0.0645" stop-color="#cbb029"/><stop offset="0.0645" stop-color="#c9ae29"/><stop offset="0.0973" stop-color="#c9ae29"/><stop offset="0.0973" stop-color="#c5ab28"/><stop offset="0.1359" stop-color="#c5ab28"/><stop offset="0.1359" stop-color="#c2a827"/><stop offset="0.1799" stop-color="#c2a827"/><stop offset="0.1799" stop-color="#bda526"/><stop offset="0.2285" stop-color="#bda526"/><stop offset="0.2285" stop-color="#b8a025"/><stop offset="0.2811" stop-color="#b8a025"/><stop offset="0.2811" stop-color="#b39b24"/><stop offset="0.3369" stop-color="#b39b24"/><stop offset="0.3369" stop-color="#ad9523"/><stop offset="0.3951" stop-color="#ad9523"/><stop offset="0.3951" stop-color="#a78f22"/><stop offset="0.4548" stop-color="#a78f22"/><stop offset="0.4548" stop-color="#a18920"/><stop offset="0.5151" stop-color="#a18920"/><stop offset="0.5151" stop-color="#957f1e"/><stop offset="0.5752" stop-color="#957f1e"/><stop offset="0.5752" stop-color="#87731b"/><stop offset="0.6343" stop-color="#87731b"/><stop offset="0.6343" stop-color="#776517"/><stop offset="0.6913" stop-color="#776517"/><stop offset="0.6913" stop-color="#594b10"/><stop offset="0.7456" stop-color="#594b10"/><stop offset="0.7456" stop-color="#3d3309"/><stop offset="0.7963" stop-color="#3d3309"/><stop offset="0.7963" stop-color="#4b3f0c"/><stop offset="0.8427" stop-color="#4b3f0c"/><stop offset="0.8427" stop-color="#5d4e11"/><stop offset="0.8841" stop-color="#5d4e11"/><stop offset="0.8841" stop-color="#6c5c14"/><stop offset="0.9199" stop-color="#6c5c14"/><stop offset="0.9199" stop-color="#766617"/><stop offset="0.9495" stop-color="#766617"/><stop offset="0.9495" stop-color="#7e6e19"/><stop offset="0.9726" stop-color="#7e6e19"/><stop offset="0.9726" stop-color="#84741b"/><stop offset="0.9889" stop-color="#84741b"/><stop offset="0.9889" stop-color="#88781b"/><stop offset="0.9979" stop-color="#88781b"/><stop offset="0.9979" stop-color="#8a7a1c"/><stop offset="1.0000" stop-color="#8a7a1c"/></linearGradient></defs>
<path d="M310.0,210 L310.2,416 L310.2,416 L314,421 L320,427 L332.5,433.3 L345,437 L360,439.8 L380,443 L400,445.3 L430,446.8 L460,447.3 L490,446.5 L510,442 L525,436.5 L537,428.6 L545,421 L551,412.6 L551.0,210 Z" fill="url(#gBand)"/>
<path d="M310.0,380 A120.5 35 0 0 0 551.0,380 L551,412.6 L551,412.6 L545,421 L537,428.6 L525,436.5 L510,442 L490,446.5 L460,447.3 L430,446.8 L400,445.3 L380,443 L360,439.8 L345,437 L332.5,433.3 L320,427 L314,421 L310.2,416 Z" fill="url(#gBand)"/>
<path d="M310.00,342 A120.5 35 0 0 0 551.00,342 L556.00,380 A125.5 35 0 0 1 305.00,380 Z" fill="url(#gCone)"/>
<path d="M305.00,330 A125.5 35 0 0 0 556.00,330 L551.00,342 A120.5 35 0 0 1 310.00,342 Z" fill="url(#gShelf)"/>
<path d="M310.00,293 A120.5 35 0 0 0 551.00,293 L556.00,330 A125.5 35 0 0 1 305.00,330 Z" fill="url(#gCone)"/>
<path d="M305.00,281 A125.5 35 0 0 0 556.00,281 L551.00,293 A120.5 35 0 0 1 310.00,293 Z" fill="url(#gShelf)"/>
<path d="M310.00,247 A120.5 35 0 0 0 551.00,247 L556.00,281 A125.5 35 0 0 1 305.00,281 Z" fill="url(#gCone)"/>
<path d="M310.00,210 A120.5 35 0 0 0 551.00,210 L551.00,247 A120.5 35 0 0 1 310.00,247 Z" fill="url(#gBand)"/>
<defs><linearGradient id="gRim" gradientUnits="userSpaceOnUse" x1="314" y1="0" x2="547" y2="0"><stop offset="0.0000" stop-color="#f8e03a"/><stop offset="0.1974" stop-color="#fde83c"/><stop offset="0.4979" stop-color="#f8e038"/><stop offset="0.7983" stop-color="#ead034"/><stop offset="0.9270" stop-color="#dcc030"/><stop offset="1.0000" stop-color="#c0a42a"/></linearGradient><linearGradient id="gInner" gradientUnits="userSpaceOnUse" x1="321.0" y1="0" x2="540.5" y2="0"><stop offset="0.0000" stop-color="#618437"/><stop offset="0.0082" stop-color="#618437"/><stop offset="0.0082" stop-color="#5d7e34"/><stop offset="0.0226" stop-color="#5d7e34"/><stop offset="0.0226" stop-color="#567530"/><stop offset="0.0441" stop-color="#567530"/><stop offset="0.0441" stop-color="#4e692a"/><stop offset="0.0721" stop-color="#4e692a"/><stop offset="0.0721" stop-color="#445b25"/><stop offset="0.1064" stop-color="#445b25"/><stop offset="0.1064" stop-color="#384c20"/><stop offset="0.1464" stop-color="#384c20"/><stop offset="0.1464" stop-color="#2e3d1b"/><stop offset="0.1916" stop-color="#2e3d1b"/><stop offset="0.1916" stop-color="#232e16"/><stop offset="0.2413" stop-color="#232e16"/><stop offset="0.2413" stop-color="#28361a"/><stop offset="0.2948" stop-color="#28361a"/><stop offset="0.2948" stop-color="#32441e"/><stop offset="0.3512" stop-color="#32441e"/><stop offset="0.3512" stop-color="#455f26"/><stop offset="0.4099" stop-color="#455f26"/><stop offset="0.4099" stop-color="#4f6c2c"/><stop offset="0.4698" stop-color="#4f6c2c"/><stop offset="0.4698" stop-color="#597931"/><stop offset="0.5302" stop-color="#597931"/><stop offset="0.5302" stop-color="#608335"/><stop offset="0.5901" stop-color="#608335"/><stop offset="0.5901" stop-color="#668c37"/><stop offset="0.6488" stop-color="#668c37"/><stop offset="0.6488" stop-color="#6c963a"/><stop offset="0.7052" stop-color="#6c963a"/><stop offset="0.7052" stop-color="#759f3f"/><stop offset="0.7587" stop-color="#759f3f"/><stop offset="0.7587" stop-color="#7ea743"/><stop offset="0.8084" stop-color="#7ea743"/><stop offset="0.8084" stop-color="#85ad47"/><stop offset="0.8536" stop-color="#85ad47"/><stop offset="0.8536" stop-color="#87af48"/><stop offset="0.8936" stop-color="#87af48"/><stop offset="0.8936" stop-color="#88b149"/><stop offset="0.9279" stop-color="#88b149"/><stop offset="0.9279" stop-color="#8ab34a"/><stop offset="0.9559" stop-color="#8ab34a"/><stop offset="0.9559" stop-color="#8bb44b"/><stop offset="0.9774" stop-color="#8bb44b"/><stop offset="0.9774" stop-color="#8bb54c"/><stop offset="0.9918" stop-color="#8bb54c"/><stop offset="0.9918" stop-color="#8cb64c"/><stop offset="0.9991" stop-color="#8cb64c"/><stop offset="0.9991" stop-color="#8cb64c"/><stop offset="1.0000" stop-color="#8cb64c"/></linearGradient></defs>
<defs><linearGradient id="gRimO" gradientUnits="userSpaceOnUse" x1="310" y1="0" x2="551" y2="0"><stop offset="0" stop-color="#e2c62e"/><stop offset="0.2" stop-color="#eed232"/><stop offset="0.6" stop-color="#e6ca30"/><stop offset="0.85" stop-color="#c8ac28"/><stop offset="0.96" stop-color="#8a761a"/><stop offset="1" stop-color="#5a4a10"/></linearGradient></defs>
<ellipse cx="430.5" cy="209.5" rx="120.5" ry="35.5" fill="url(#gRimO)"/>
<ellipse cx="430.6" cy="208.6" rx="118" ry="34.6" fill="url(#gRim)"/>
<defs><linearGradient id="gRimI" gradientUnits="userSpaceOnUse" x1="318" y1="0" x2="543" y2="0"><stop offset="0" stop-color="#e4c830"/><stop offset="0.5" stop-color="#e8cc32"/><stop offset="1" stop-color="#d4b82c"/></linearGradient></defs>
<ellipse cx="430.7" cy="206.9" rx="112.8" ry="32.6" fill="url(#gRimI)"/>
<ellipse cx="430.75" cy="206.5" rx="109.75" ry="31.5" fill="url(#gInner)"/>
<line x1="351.5" y1="0" x2="351.5" y2="227.5" stroke="#000000" stroke-width="1" shape-rendering="crispEdges"/>
<line x1="324" y1="23" x2="351.3" y2="29.4" stroke="#000000" stroke-width="1" shape-rendering="crispEdges"/>
<line x1="296" y1="77.4" x2="351.3" y2="90.7" stroke="#000000" stroke-width="1" shape-rendering="crispEdges"/>
<line x1="324.3" y1="144" x2="351.3" y2="151" stroke="#000000" stroke-width="1" shape-rendering="crispEdges"/>
<line x1="346" y1="210" x2="351.3" y2="211.5" stroke="#000000" stroke-width="1" shape-rendering="crispEdges"/>
<path d="M358.8,49.2 L386.6,55.6 M359,57.6 L386.6,63.8 L386.6,81 L359,75.2 Z M359,83.4 L386.6,90 L386.6,107 L359,100.9 Z" fill="none" stroke="#000" stroke-width="1" shape-rendering="crispEdges"/>
</svg>
</body></html>
